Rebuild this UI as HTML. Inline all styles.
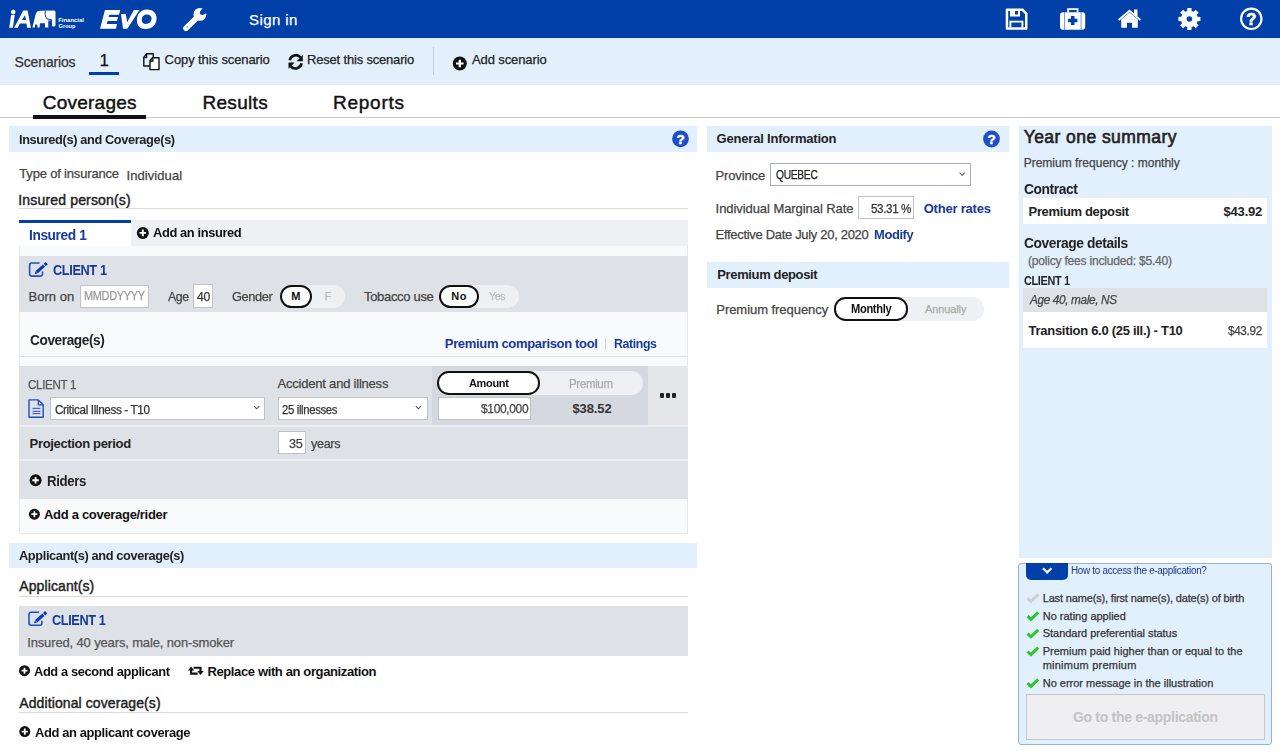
<!DOCTYPE html>
<html><head><meta charset="utf-8"><style>
html,body{margin:0;padding:0;}
body{width:1280px;height:754px;overflow:hidden;position:relative;background:#fff;font-family:"Liberation Sans",sans-serif;}
body>div,body>svg{position:absolute;}
.t{white-space:nowrap;}
.r{-webkit-text-stroke:0.25px currentColor;}
.sb{-webkit-text-stroke:0.6px currentColor;}
.md{-webkit-text-stroke:0.42px currentColor;}
</style></head><body>
<div style="left:0px;top:0px;width:1280px;height:38px;background:#0040a8;"></div>
<svg style="left:0px;top:0px;" width="90" height="38" viewBox="0 0 90 38"><circle cx="13.2" cy="12.1" r="2.3" fill="#fff"/><path d="M9.2 27.65 L12.9 27.65 L14.7 15 L11.1 15 Z" fill="#fff"/><path d="M14.1 27.65 L23.3 10.6 L27.6 10.6 L30.9 27.65 L27.2 27.65 L26.5 23.5 L19.9 23.5 L17.7 27.65 Z M21.8 20 L25.9 20 L25.1 15.2 Z" fill="#fff" fill-rule="evenodd"/><path d="M32.4 27.6 L35.8 13.8 Q36.8 10.8 40.2 10.8 L54 10.4 Q55.5 10.4 55.5 12.2 L55.5 25 Q55.5 26.6 54 26.6 L53.2 26.6 Q51.8 26.6 51.8 25.2 L51.8 20.5 L48.3 20.5 L48.3 27.6 L45 27.6 L45 23.3 L39.9 23.3 L39.6 27.6 L37.5 27.6 L37.2 24.5 L35.2 24.5 L34.8 27.6 Z" fill="#fff"/><path d="M45.2 10.8 Q44.6 19.4 49 19.4 L51.3 19.4 L51.3 26" fill="none" stroke="#0040a8" stroke-width="1"/><text x="58.2" y="21.6" font-family="Liberation Sans" font-weight="700" font-size="5.6" fill="#fff" textLength="25.8" lengthAdjust="spacingAndGlyphs">Financial</text><text x="58.6" y="27.6" font-family="Liberation Sans" font-weight="700" font-size="5.6" fill="#fff" textLength="16.8" lengthAdjust="spacingAndGlyphs">Group</text></svg>
<svg style="left:0px;top:0px;" width="170" height="38" viewBox="0 0 170 38"><path d="M105 10 L120.25 10 L119 14.75 L109.25 14.75 L108.6 16.9 L118 16.9 L117 21 L107.6 21 L106.8 24 L117 24 L116 28.75 L100 28.75 Z" fill="#fff"/><path d="M121 14 L125.8 14 L127.2 22.3 L133.8 10 L139.5 10 L127.3 28.75 L123 28.75 Z" fill="#fff"/><path d="M146.8 9.6 C152.5 9.6 156.6 13 156.6 18.2 C156.6 24.6 152 28.9 145.8 28.9 C140.2 28.9 136.9 25.4 136.9 20.4 C136.9 14 141.2 9.6 146.8 9.6 Z M146.5 14.5 C143.8 14.5 141.8 16.8 141.8 19.9 C141.8 22.4 143.4 24 145.8 24 C148.8 24 151.6 21.8 151.6 18.3 C151.6 15.9 149.6 14.5 146.5 14.5 Z" fill="#fff" fill-rule="evenodd"/></svg>
<svg style="left:0px;top:0px;" width="215" height="38" viewBox="0 0 215 38"><defs><mask id="wm" maskUnits="userSpaceOnUse" x="0" y="0" width="215" height="38"><rect width="215" height="38" fill="#fff"/><circle cx="202.4" cy="12.4" r="2.5" fill="#000"/><path d="M200.6 10.6 L205 6.2 L210 11.2 L204.2 14.2 Z" fill="#000"/></mask></defs><g mask="url(#wm)"><circle cx="199.9" cy="14.4" r="6.4" fill="#fff"/><path d="M197 17.4 L186 28.2" stroke="#fff" stroke-width="5.6" stroke-linecap="round"/></g><circle cx="187.3" cy="26.9" r="0.6" fill="#0040a8"/></svg>
<div class="t r" style="left:249.00px;top:12.30px;font-size:15px;line-height:15px;letter-spacing:0.413px;color:#fff;">Sign in</div>
<svg style="left:0px;top:0px;" width="1030" height="38" viewBox="0 0 1030 38"><path d="M1006.5 8.5 H1023 L1027.5 13 V28.5 Q1027.5 29.8 1026.2 29.8 H1007 Q1005.7 29.8 1005.7 28.5 V9.5 Q1005.7 8.5 1006.5 8.5 Z M1008.2 11 V27.3 H1025 V14 L1022 11 Z" fill="#fff" fill-rule="evenodd"/><path d="M1010 9.8 H1020 V16.5 H1010 Z M1015 10.5 V14.5 H1018 V10.5 Z" fill="#fff" fill-rule="evenodd"/><path d="M1009.4 20.8 H1023.4 V27.4 H1009.4 Z M1011.4 22.6 V27.4 H1021.4 V22.6 Z" fill="#fff" fill-rule="evenodd"/></svg>
<svg style="left:0px;top:0px;" width="1090" height="38" viewBox="0 0 1090 38"><path d="M1067.2 8.3 H1078.5 V12.2 H1076.6 V10 H1069.1 V12.2 H1067.2 Z" fill="#fff"/><rect x="1060" y="12.2" width="25.2" height="17.6" rx="3" fill="#fff"/><path d="M1064.6 12.2 V29.8 M1081.1 12.2 V29.8" stroke="#0040a8" stroke-width="0.8" opacity="0.7"/><path d="M1071 16 H1074.5 V18.8 H1077.4 V22.2 H1074.5 V25 H1071 V22.2 H1068.1 V18.8 H1071 Z" fill="#0040a8"/></svg>
<svg style="left:0px;top:0px;" width="1145" height="38" viewBox="0 0 1145 38"><path d="M1118 19.3 L1129.5 9.6 L1134 13.4 V9.6 H1137.5 V16.4 L1141 19.3 L1139.8 20.7 L1129.5 12.1 L1119.2 20.7 Z" fill="#fff"/><path d="M1121.2 19.4 L1129.5 12.6 L1137.8 19.4 V27.8 H1132 V22.8 H1127 V27.8 H1121.2 Z" fill="#fff"/></svg>
<svg style="left:0px;top:0px;" width="1210" height="38" viewBox="0 0 1210 38"><path d="M1197.52 16.84 L1200.40 16.88 L1200.40 21.12 L1197.52 21.16 L1196.67 23.21 L1198.67 25.28 L1195.68 28.27 L1193.61 26.27 L1191.56 27.12 L1191.52 30.00 L1187.28 30.00 L1187.24 27.12 L1185.19 26.27 L1183.12 28.27 L1180.13 25.28 L1182.13 23.21 L1181.28 21.16 L1178.40 21.12 L1178.40 16.88 L1181.28 16.84 L1182.13 14.79 L1180.13 12.72 L1183.12 9.73 L1185.19 11.73 L1187.24 10.88 L1187.28 8.00 L1191.52 8.00 L1191.56 10.88 L1193.61 11.73 L1195.68 9.73 L1198.67 12.72 L1196.67 14.79 Z M1192.20 19.00 A2.8 2.8 0 1 0 1186.60 19.00 A2.8 2.8 0 1 0 1192.20 19.00 Z" fill="#fff" fill-rule="evenodd"/></svg>
<svg style="left:0px;top:0px;" width="1280" height="38" viewBox="0 0 1280 38"><circle cx="1251.3" cy="18.8" r="10.2" fill="none" stroke="#fff" stroke-width="2.2"/><text x="1251.3" y="24.9" text-anchor="middle" font-family="Liberation Sans" font-weight="700" font-size="16.5" fill="#fff" stroke="#fff" stroke-width="0.7">?</text></svg>
<div style="left:0px;top:38px;width:1280px;height:47px;background:#e3f0fc;"></div>
<div class="t r" style="left:14.60px;top:54.65px;font-size:14px;line-height:14px;letter-spacing:-0.157px;color:#333;">Scenarios</div>
<div class="t r" style="left:99.40px;top:52.11px;font-size:17px;line-height:17px;color:#111;">1</div>
<div style="left:89px;top:72px;width:30px;height:3px;background:#0040a8;"></div>
<svg style="left:0px;top:0px;" width="165" height="85" viewBox="0 0 165 85"><path d="M146 53.8 H153.3 V57.6 M149.6 66 H143.8 V57.2 L146.8 53.8" fill="none" stroke="#111" stroke-width="1.4" stroke-linejoin="round"/><path d="M143.8 57.5 H146.6 V54" fill="none" stroke="#111" stroke-width="1.3"/><path d="M152.6 57.8 H159 V69.6 H150 V60.6 Z" fill="#fff" stroke="#111" stroke-width="1.4" stroke-linejoin="round"/><path d="M150 61 H152.8 V58" fill="none" stroke="#111" stroke-width="1.3"/></svg>
<div class="t r" style="left:164.60px;top:52.90px;font-size:13px;line-height:13px;letter-spacing:-0.101px;color:#222;">Copy this scenario</div>
<svg style="left:0px;top:0px;" width="310" height="85" viewBox="0 0 310 85"><path d="M289.7 60.3 A6.3 6.3 0 0 1 300.6 57.3" fill="none" stroke="#111" stroke-width="2.6"/><path d="M302.8 55 V61.2 H296.6 Z" fill="#111"/><path d="M301.6 63.3 A6.3 6.3 0 0 1 290.7 66.3" fill="none" stroke="#111" stroke-width="2.6"/><path d="M288.5 68.8 V62.5 H294.7 Z" fill="#111"/></svg>
<div class="t r" style="left:307.00px;top:52.90px;font-size:13px;line-height:13px;letter-spacing:-0.184px;color:#222;">Reset this scenario</div>
<div style="left:433px;top:47px;width:1px;height:28px;background:#c9ced6;"></div>
<svg style="left:0px;top:0px;" width="470" height="85" viewBox="0 0 470 85"><circle cx="459.8" cy="63.5" r="7" fill="#111"/><path d="M456 63.5 H463.6 M459.8 59.7 V67.3" stroke="#fff" stroke-width="2.2"/></svg>
<div class="t r" style="left:472.00px;top:52.90px;font-size:13px;line-height:13px;letter-spacing:-0.105px;color:#222;">Add scenario</div>
<div class="t md" style="left:42.70px;top:92.92px;font-size:19px;line-height:19px;letter-spacing:0.240px;color:#111;">Coverages</div>
<div class="t md" style="left:202.40px;top:92.92px;font-size:19px;line-height:19px;letter-spacing:0.324px;color:#111;">Results</div>
<div class="t md" style="left:333.00px;top:92.92px;font-size:19px;line-height:19px;letter-spacing:0.745px;color:#111;">Reports</div>
<div style="left:0px;top:117px;width:1280px;height:1px;background:#cbcbcb;"></div>
<div style="left:33px;top:115px;width:113px;height:4px;background:#111;"></div>
<div style="left:9px;top:126px;width:688px;height:26px;background:#e2effc;"></div>
<div class="t" style="left:19.20px;top:132.50px;font-size:13px;line-height:13px;font-weight:700;letter-spacing:-0.390px;transform:scaleX(0.9846);transform-origin:0 0;color:#222;">Insured(s) and Coverage(s)</div>
<svg style="left:0px;top:0px;" width="1280" height="754" viewBox="0 0 1280 754"><circle cx="680.5" cy="138.8" r="8.4" fill="#1f4fc8"/><text x="680.5" y="143.8" text-anchor="middle" font-family="Liberation Sans" font-weight="700" font-size="13.5" fill="#fff" stroke="#fff" stroke-width="0.5">?</text></svg>
<div class="t r" style="left:19.30px;top:167.30px;font-size:13px;line-height:13px;letter-spacing:-0.180px;color:#444;">Type of insurance</div>
<div class="t r" style="left:126.60px;top:168.90px;font-size:13px;line-height:13px;letter-spacing:0.062px;color:#444;">Individual</div>
<div class="t md" style="left:18.30px;top:192.85px;font-size:14px;line-height:14px;letter-spacing:0.165px;color:#222;">Insured person(s)</div>
<div style="left:19px;top:208px;width:669px;height:1px;background:#d9d9d9;"></div>
<div style="left:19px;top:220px;width:669px;height:26px;background:#eef0f3;"></div>
<div style="left:19px;top:220px;width:112px;height:26px;background:#fff;"></div>
<div style="left:19px;top:220px;width:112px;height:3px;background:#0040a8;"></div>
<div class="t" style="left:29.00px;top:227.95px;font-size:14px;line-height:14px;font-weight:700;letter-spacing:-0.420px;transform:scaleX(0.9815);transform-origin:0 0;color:#16399b;">Insured 1</div>
<svg style="left:0px;top:0px;" width="1280" height="754" viewBox="0 0 1280 754"><circle cx="142.8" cy="232.9" r="6" fill="#111"/><path d="M139.5 232.9 H146.10000000000002 M142.8 229.6 V236.20000000000002" stroke="#fff" stroke-width="1.92"/></svg>
<div class="t" style="left:153.40px;top:226.20px;font-size:13px;line-height:13px;font-weight:700;letter-spacing:-0.390px;transform:scaleX(0.9910);transform-origin:0 0;color:#111;">Add an insured</div>
<div style="left:19px;top:246px;width:669px;height:288px;background:#f8fafc;border:1px solid #e6e8eb;box-sizing:border-box;border-top:none;"></div>
<div style="left:19px;top:256px;width:669px;height:56px;background:#dee2e7;"></div>
<svg style="left:0px;top:0px;" width="1280" height="754" viewBox="0 0 1280 754"><path d="M39.6 263.0 H31.8 A2.2 2.2 0 0 0 29.6 265.2 V273.9 A2.2 2.2 0 0 0 31.8 276.09999999999997 H40.3 A2.2 2.2 0 0 0 42.5 273.9 V271.5" fill="none" stroke="#1f4fc8" stroke-width="1.6"/><path d="M36.7 272.09999999999997 L44.0 265.59999999999997" stroke="#0a3ab8" stroke-width="3.2" stroke-linecap="butt"/><path d="M44.7 265.0 L46.8 263.09999999999997" stroke="#0a3ab8" stroke-width="3.2" stroke-linecap="butt"/><path d="M35.4 271.2 L37.7 273.5 L34.8 274.09999999999997 Z" fill="#0a3ab8"/></svg>
<div class="t" style="left:53.20px;top:262.95px;font-size:14px;line-height:14px;font-weight:700;letter-spacing:-0.420px;transform:scaleX(0.9109);transform-origin:0 0;color:#16399b;">CLIENT 1</div>
<div class="t r" style="left:28.60px;top:289.80px;font-size:13px;line-height:13px;color:#444;">Born on</div>
<div style="left:80px;top:284.5px;width:69px;height:23px;background:#fff;border:1px solid #bfc3c8;box-sizing:border-box;"></div>
<div class="t r" style="left:83.70px;top:290.34px;font-size:12px;line-height:12px;letter-spacing:-0.360px;transform:scaleX(0.9130);transform-origin:0 0;color:#999;">MMDDYYYY</div>
<div class="t r" style="left:167.80px;top:289.80px;font-size:13px;line-height:13px;letter-spacing:-0.390px;transform:scaleX(0.9493);transform-origin:0 0;color:#444;">Age</div>
<div style="left:193px;top:284px;width:20px;height:24px;background:#fff;border:1px solid #bfc3c8;box-sizing:border-box;"></div>
<div class="t r" style="left:197.40px;top:289.50px;font-size:13px;line-height:13px;letter-spacing:-0.390px;transform:scaleX(0.9393);transform-origin:0 0;color:#333;">40</div>
<div class="t r" style="left:232.30px;top:289.80px;font-size:13px;line-height:13px;letter-spacing:-0.390px;transform:scaleX(0.9862);transform-origin:0 0;color:#444;">Gender</div>
<div style="left:279.6px;top:284.5px;width:65px;height:23.5px;background:#eef0f3;border-radius:11.75px;"></div>
<div style="left:279.6px;top:284.5px;width:32.5px;height:23.5px;background:#fff;border:2px solid #111;box-sizing:border-box;border-radius:11.75px;"></div>
<div class="t" style="left:291.20px;top:291.19px;font-size:11px;line-height:11px;font-weight:700;color:#111;">M</div>
<div class="t r" style="left:324.50px;top:290.89px;font-size:11px;line-height:11px;color:#bbb;">F</div>
<div class="t r" style="left:364.00px;top:289.80px;font-size:13px;line-height:13px;letter-spacing:-0.316px;color:#444;">Tobacco use</div>
<div style="left:439px;top:284.5px;width:80px;height:23.5px;background:#eef0f3;border-radius:11.75px;"></div>
<div style="left:439px;top:284.5px;width:40px;height:23.5px;background:#fff;border:2px solid #111;box-sizing:border-box;border-radius:11.75px;"></div>
<div class="t" style="left:451.15px;top:291.19px;font-size:11px;line-height:11px;font-weight:700;letter-spacing:0.556px;color:#111;">No</div>
<div class="t r" style="left:489.40px;top:290.89px;font-size:11px;line-height:11px;letter-spacing:-0.330px;transform:scaleX(0.9559);transform-origin:0 0;color:#bbb;">Yes</div>
<div class="t" style="left:29.60px;top:332.55px;font-size:14px;line-height:14px;font-weight:700;letter-spacing:-0.420px;transform:scaleX(0.9756);transform-origin:0 0;color:#222;">Coverage(s)</div>
<div class="t" style="left:444.80px;top:336.80px;font-size:13px;line-height:13px;font-weight:700;letter-spacing:-0.330px;color:#16399b;">Premium comparison tool</div>
<div style="left:605px;top:338px;width:1px;height:12px;background:#cfd3d8;"></div>
<div class="t" style="left:614.00px;top:336.80px;font-size:13px;line-height:13px;font-weight:700;letter-spacing:-0.390px;transform:scaleX(0.9468);transform-origin:0 0;color:#16399b;">Ratings</div>
<div style="left:19px;top:356px;width:669px;height:1px;background:#dde0e4;"></div>
<div style="left:19px;top:366px;width:669px;height:59px;background:#dee2e7;"></div>
<div style="left:432px;top:366px;width:216px;height:59px;background:#d5d8de;"></div>
<div style="left:648px;top:366px;width:40px;height:59px;background:#e4e6ea;"></div>
<div class="t r" style="left:27.60px;top:377.50px;font-size:13px;line-height:13px;letter-spacing:-0.390px;transform:scaleX(0.8944);transform-origin:0 0;color:#555;">CLIENT 1</div>
<div class="t r" style="left:277.60px;top:377.00px;font-size:13px;line-height:13px;letter-spacing:-0.216px;color:#444;">Accident and illness</div>
<div style="left:437px;top:371.4px;width:206px;height:23.6px;background:#eef0f3;border-radius:11.8px;"></div>
<div style="left:437px;top:371.4px;width:103px;height:23.6px;background:#fff;border:2px solid #111;box-sizing:border-box;border-radius:11.8px;"></div>
<div class="t" style="left:469.00px;top:377.87px;font-size:11.5px;line-height:11.5px;font-weight:700;letter-spacing:-0.345px;transform:scaleX(0.9551);transform-origin:0 0;color:#111;">Amount</div>
<div class="t r" style="left:569.20px;top:378.34px;font-size:12px;line-height:12px;letter-spacing:-0.360px;transform:scaleX(0.9597);transform-origin:0 0;color:#aaa;">Premium</div>
<svg style="left:0px;top:0px;" width="1280" height="754" viewBox="0 0 1280 754"><path d="M29 399.9 H38.3 L43.2 404.8 V417.2 H29 Z" fill="none" stroke="#1f4fc8" stroke-width="1.4" stroke-linejoin="round"/><path d="M38.3 400 V404.8 H43.2" fill="none" stroke="#1f4fc8" stroke-width="1.3"/><path d="M32.5 408.3 H40.3 M32.5 411.3 H40.3 M32.5 413.6 H40.3" stroke="#1f4fc8" stroke-width="1"/></svg>
<div style="left:50px;top:397px;width:215px;height:23px;background:#fff;border:1px solid #bfc3c8;box-sizing:border-box;"></div>
<div class="t r" style="left:54.60px;top:403.64px;font-size:12px;line-height:12px;letter-spacing:-0.360px;transform:scaleX(0.9733);transform-origin:0 0;color:#333;">Critical Illness - T10</div>
<svg style="left:0px;top:0px;" width="1280" height="754" viewBox="0 0 1280 754"><path d="M254.1 406.2 L256.7 408.8 L259.3 406.2" fill="none" stroke="#555" stroke-width="1.1"/></svg>
<div style="left:277.6px;top:397px;width:150px;height:23px;background:#fff;border:1px solid #bfc3c8;box-sizing:border-box;"></div>
<div class="t r" style="left:282.30px;top:403.64px;font-size:12px;line-height:12px;letter-spacing:-0.360px;transform:scaleX(0.9431);transform-origin:0 0;color:#333;">25 illnesses</div>
<svg style="left:0px;top:0px;" width="1280" height="754" viewBox="0 0 1280 754"><path d="M415.79999999999995 406.2 L418.4 408.8 L421.0 406.2" fill="none" stroke="#555" stroke-width="1.1"/></svg>
<div style="left:437.5px;top:397px;width:93px;height:23px;background:#fff;border:1px solid #bfc3c8;box-sizing:border-box;"></div>
<div class="t r" style="left:480.60px;top:401.80px;font-size:13px;line-height:13px;letter-spacing:-0.390px;transform:scaleX(0.9247);transform-origin:0 0;color:#444;">$100,000</div>
<div class="t" style="left:572.40px;top:401.80px;font-size:13px;line-height:13px;font-weight:700;letter-spacing:-0.106px;color:#333;">$38.52</div>
<div style="left:660.0px;top:392.8px;width:4.4px;height:4.8px;background:#222;border-radius:1px;"></div>
<div style="left:666.0px;top:392.8px;width:4.4px;height:4.8px;background:#222;border-radius:1px;"></div>
<div style="left:671.9px;top:392.8px;width:4.4px;height:4.8px;background:#222;border-radius:1px;"></div>
<div style="left:19px;top:425px;width:669px;height:2px;background:#eceef1;"></div>
<div style="left:19px;top:427px;width:669px;height:32px;background:#dee2e7;"></div>
<div class="t" style="left:29.60px;top:437.00px;font-size:13px;line-height:13px;font-weight:700;letter-spacing:-0.335px;color:#222;">Projection period</div>
<div style="left:277.6px;top:431.3px;width:28px;height:23.2px;background:#fff;border:1px solid #bfc3c8;box-sizing:border-box;"></div>
<div class="t r" style="left:289.00px;top:437.00px;font-size:13px;line-height:13px;letter-spacing:-0.390px;transform:scaleX(0.9754);transform-origin:0 0;color:#444;">35</div>
<div class="t r" style="left:310.70px;top:437.00px;font-size:13px;line-height:13px;letter-spacing:-0.390px;transform:scaleX(0.9763);transform-origin:0 0;color:#444;">years</div>
<div style="left:19px;top:459px;width:669px;height:2px;background:#eceef1;"></div>
<div style="left:19px;top:461px;width:669px;height:37.5px;background:#dee2e7;"></div>
<svg style="left:0px;top:0px;" width="1280" height="754" viewBox="0 0 1280 754"><circle cx="35.6" cy="480.3" r="6" fill="#111"/><path d="M32.300000000000004 480.3 H38.9 M35.6 477.0 V483.6" stroke="#fff" stroke-width="1.92"/></svg>
<div class="t" style="left:46.60px;top:473.75px;font-size:14px;line-height:14px;font-weight:700;letter-spacing:-0.420px;transform:scaleX(0.9476);transform-origin:0 0;color:#222;">Riders</div>
<svg style="left:0px;top:0px;" width="1280" height="754" viewBox="0 0 1280 754"><circle cx="34.4" cy="514.2" r="5.5" fill="#111"/><path d="M31.375 514.2 H37.425 M34.4 511.17500000000007 V517.225" stroke="#fff" stroke-width="1.76"/></svg>
<div class="t" style="left:44.00px;top:508.00px;font-size:13px;line-height:13px;font-weight:700;letter-spacing:-0.304px;color:#111;">Add a coverage/rider</div>
<div style="left:9px;top:542.5px;width:688px;height:25.5px;background:#e2effc;"></div>
<div class="t" style="left:19.30px;top:548.70px;font-size:13px;line-height:13px;font-weight:700;letter-spacing:-0.390px;transform:scaleX(0.9847);transform-origin:0 0;color:#222;">Applicant(s) and coverage(s)</div>
<div class="t md" style="left:19.30px;top:579.35px;font-size:14px;line-height:14px;letter-spacing:0.095px;color:#222;">Applicant(s)</div>
<div style="left:19px;top:596px;width:669px;height:1px;background:#d9d9d9;"></div>
<div style="left:19px;top:606px;width:669px;height:49.5px;background:#dee2e7;"></div>
<svg style="left:0px;top:0px;" width="1280" height="754" viewBox="0 0 1280 754"><path d="M39.0 612.1999999999999 H31.2 A2.2 2.2 0 0 0 29.0 614.4 V623.1 A2.2 2.2 0 0 0 31.2 625.3 H39.7 A2.2 2.2 0 0 0 41.9 623.1 V620.6999999999999" fill="none" stroke="#1f4fc8" stroke-width="1.6"/><path d="M36.1 621.3 L43.4 614.8" stroke="#0a3ab8" stroke-width="3.2" stroke-linecap="butt"/><path d="M44.1 614.1999999999999 L46.2 612.3" stroke="#0a3ab8" stroke-width="3.2" stroke-linecap="butt"/><path d="M34.8 620.4 L37.1 622.6999999999999 L34.2 623.3 Z" fill="#0a3ab8"/></svg>
<div class="t" style="left:52.00px;top:612.65px;font-size:14px;line-height:14px;font-weight:700;letter-spacing:-0.420px;transform:scaleX(0.9075);transform-origin:0 0;color:#16399b;">CLIENT 1</div>
<div class="t r" style="left:27.20px;top:635.70px;font-size:13px;line-height:13px;letter-spacing:-0.141px;color:#555;">Insured, 40 years, male, non-smoker</div>
<svg style="left:0px;top:0px;" width="1280" height="754" viewBox="0 0 1280 754"><circle cx="24.5" cy="670.7" r="5.5" fill="#111"/><path d="M21.475 670.7 H27.525 M24.5 667.6750000000001 V673.725" stroke="#fff" stroke-width="1.76"/></svg>
<div class="t" style="left:34.20px;top:664.60px;font-size:13px;line-height:13px;font-weight:700;letter-spacing:-0.390px;transform:scaleX(0.9878);transform-origin:0 0;color:#111;">Add a second applicant</div>
<svg style="left:0px;top:0px;" width="1280" height="754" viewBox="0 0 1280 754"><path d="M191.1 669.5 V673.6 H197.6 M193.6 667.8 H200.5 V671.8" fill="none" stroke="#111" stroke-width="2.1"/><path d="M187.9 670.6 L191.1 666.6 L194.3 670.6 Z M197.3 671.1 L200.5 675.1 L203.7 671.1 Z" fill="#111"/></svg>
<div class="t" style="left:207.40px;top:664.60px;font-size:13px;line-height:13px;font-weight:700;letter-spacing:-0.370px;color:#111;">Replace with an organization</div>
<div class="t md" style="left:19.30px;top:696.05px;font-size:14px;line-height:14px;letter-spacing:0.094px;color:#222;">Additional coverage(s)</div>
<div style="left:19px;top:712px;width:669px;height:1px;background:#d9d9d9;"></div>
<svg style="left:0px;top:0px;" width="1280" height="754" viewBox="0 0 1280 754"><circle cx="24.8" cy="731.6" r="5.5" fill="#111"/><path d="M21.775 731.6 H27.825000000000003 M24.8 728.575 V734.625" stroke="#fff" stroke-width="1.76"/></svg>
<div class="t" style="left:35.00px;top:725.50px;font-size:13px;line-height:13px;font-weight:700;letter-spacing:-0.390px;transform:scaleX(0.9959);transform-origin:0 0;color:#111;">Add an applicant coverage</div>
<div style="left:707px;top:126px;width:302px;height:26px;background:#e2effc;"></div>
<div class="t" style="left:716.60px;top:132.40px;font-size:13px;line-height:13px;font-weight:700;letter-spacing:-0.199px;color:#222;">General Information</div>
<svg style="left:0px;top:0px;" width="1280" height="754" viewBox="0 0 1280 754"><circle cx="991.5" cy="139" r="8.4" fill="#1f4fc8"/><text x="991.5" y="144" text-anchor="middle" font-family="Liberation Sans" font-weight="700" font-size="13.5" fill="#fff" stroke="#fff" stroke-width="0.5">?</text></svg>
<div class="t r" style="left:715.60px;top:168.60px;font-size:13px;line-height:13px;letter-spacing:-0.150px;color:#444;">Province</div>
<div style="left:770px;top:163px;width:201px;height:23.4px;background:#fff;border:1px solid #aab0b8;box-sizing:border-box;"></div>
<div class="t r" style="left:775.50px;top:169.02px;font-size:12.5px;line-height:12.5px;letter-spacing:-0.375px;transform:scaleX(0.8214);transform-origin:0 0;color:#222;">QUEBEC</div>
<svg style="left:0px;top:0px;" width="1280" height="754" viewBox="0 0 1280 754"><path d="M959.6 172.7 L962.2 175.3 L964.8000000000001 172.7" fill="none" stroke="#555" stroke-width="1.1"/></svg>
<div class="t r" style="left:715.60px;top:202.10px;font-size:13px;line-height:13px;letter-spacing:-0.067px;color:#444;">Individual Marginal Rate</div>
<div style="left:858px;top:196.2px;width:56px;height:23px;background:#fff;border:1px solid #bfc3c8;box-sizing:border-box;"></div>
<div class="t r" style="left:871.10px;top:202.94px;font-size:12px;line-height:12px;letter-spacing:-0.360px;transform:scaleX(0.9644);transform-origin:0 0;color:#333;">53.31 %</div>
<div class="t" style="left:923.70px;top:202.10px;font-size:13px;line-height:13px;font-weight:700;letter-spacing:-0.213px;color:#16399b;">Other rates</div>
<div class="t r" style="left:715.60px;top:228.10px;font-size:13px;line-height:13px;letter-spacing:-0.315px;color:#444;">Effective Date July 20, 2020</div>
<div class="t" style="left:874.00px;top:228.10px;font-size:13px;line-height:13px;font-weight:700;letter-spacing:-0.390px;transform:scaleX(0.9950);transform-origin:0 0;color:#16399b;">Modify</div>
<div style="left:707px;top:262px;width:302px;height:25.7px;background:#e2effc;"></div>
<div class="t" style="left:717.30px;top:268.30px;font-size:13px;line-height:13px;font-weight:700;letter-spacing:-0.367px;color:#222;">Premium deposit</div>
<div class="t r" style="left:716.30px;top:302.60px;font-size:13px;line-height:13px;letter-spacing:-0.051px;color:#444;">Premium frequency</div>
<div style="left:834.3px;top:297.4px;width:149.3px;height:23.2px;background:#eef0f3;border-radius:11.6px;"></div>
<div style="left:834.3px;top:297.4px;width:74px;height:23.2px;background:#fff;border:2px solid #111;box-sizing:border-box;border-radius:11.6px;"></div>
<div class="t" style="left:851.30px;top:303.04px;font-size:12px;line-height:12px;font-weight:700;letter-spacing:-0.360px;transform:scaleX(0.9263);transform-origin:0 0;color:#111;">Monthly</div>
<div class="t r" style="left:925.00px;top:303.89px;font-size:11px;line-height:11px;letter-spacing:-0.114px;color:#aaa;">Annually</div>
<div style="left:1018.5px;top:126px;width:253px;height:432px;background:#e2effc;"></div>
<div class="t sb" style="left:1023.70px;top:128.69px;font-size:17.5px;line-height:17.5px;letter-spacing:0.435px;color:#222;">Year one summary</div>
<div class="t r" style="left:1023.70px;top:156.54px;font-size:12px;line-height:12px;color:#444;">Premium frequency : monthly</div>
<div class="t" style="left:1023.70px;top:182.15px;font-size:14px;line-height:14px;font-weight:700;letter-spacing:-0.420px;transform:scaleX(0.9862);transform-origin:0 0;color:#222;">Contract</div>
<div style="left:1023px;top:198px;width:244px;height:26px;background:#fff;"></div>
<div class="t" style="left:1028.60px;top:204.80px;font-size:13px;line-height:13px;font-weight:700;letter-spacing:-0.353px;color:#222;">Premium deposit</div>
<div class="t" style="left:1223.50px;top:204.80px;font-size:13px;line-height:13px;font-weight:700;letter-spacing:-0.186px;color:#222;">$43.92</div>
<div class="t" style="left:1023.70px;top:236.35px;font-size:14px;line-height:14px;font-weight:700;letter-spacing:-0.420px;transform:scaleX(0.9853);transform-origin:0 0;color:#222;">Coverage details</div>
<div class="t r" style="left:1028.00px;top:254.54px;font-size:12px;line-height:12px;letter-spacing:-0.194px;color:#666;">(policy fees included: $5.40)</div>
<div class="t" style="left:1023.70px;top:274.54px;font-size:12px;line-height:12px;font-weight:700;letter-spacing:-0.360px;transform:scaleX(0.9072);transform-origin:0 0;color:#222;">CLIENT 1</div>
<div style="left:1023px;top:288px;width:244px;height:24px;background:#dee2e7;"></div>
<div class="t r" style="left:1029.58px;top:293.84px;font-size:12px;line-height:12px;font-style:italic;letter-spacing:-0.360px;transform:scaleX(0.9817);transform-origin:0 0;color:#444;">Age 40, male, NS</div>
<div style="left:1023px;top:312px;width:244px;height:36px;background:#fff;"></div>
<div class="t" style="left:1028.60px;top:323.70px;font-size:13px;line-height:13px;font-weight:700;letter-spacing:-0.287px;color:#222;">Transition 6.0 (25 ill.) - T10</div>
<div class="t r" style="left:1227.70px;top:324.54px;font-size:12px;line-height:12px;letter-spacing:-0.360px;transform:scaleX(0.9793);transform-origin:0 0;color:#444;">$43.92</div>
<div style="left:1018px;top:563px;width:254px;height:182px;background:#e2effc;border:1px solid #93b2dc;box-sizing:border-box;border-radius:3px;"></div>
<div style="left:1026px;top:563px;width:42px;height:16.6px;background:#0040a8;border-radius:0 0 5px 5px;"></div>
<svg style="left:0px;top:0px;" width="1280" height="754" viewBox="0 0 1280 754"><path d="M1043.0 568.1999999999999 L1047.2 572.4 L1051.4 568.1999999999999" fill="none" stroke="#fff" stroke-width="2.2"/></svg>
<div class="t" style="left:1071.00px;top:565.83px;font-size:10px;line-height:10px;letter-spacing:-0.300px;transform:scaleX(0.9885);transform-origin:0 0;color:#16399b;">How to access the e-application?</div>
<svg style="left:0px;top:0px;" width="1280" height="754" viewBox="0 0 1280 754"><path d="M1027.5 598.2 L1030.8999999999999 601.4 L1038.1999999999998 594.4" fill="none" stroke="#cfcfcf" stroke-width="3"/></svg>
<div class="t r" style="left:1042.70px;top:592.69px;font-size:11px;line-height:11px;letter-spacing:-0.155px;color:#333;">Last name(s), first name(s), date(s) of birth</div>
<svg style="left:0px;top:0px;" width="1280" height="754" viewBox="0 0 1280 754"><path d="M1027.5 616.2 L1030.8999999999999 619.4 L1038.1999999999998 612.4" fill="none" stroke="#2ec52e" stroke-width="3"/></svg>
<div class="t r" style="left:1042.70px;top:610.69px;font-size:11px;line-height:11px;color:#333;">No rating applied</div>
<svg style="left:0px;top:0px;" width="1280" height="754" viewBox="0 0 1280 754"><path d="M1027.5 633.6 L1030.8999999999999 636.8 L1038.1999999999998 629.8" fill="none" stroke="#2ec52e" stroke-width="3"/></svg>
<div class="t r" style="left:1042.70px;top:628.09px;font-size:11px;line-height:11px;letter-spacing:-0.024px;color:#333;">Standard preferential status</div>
<svg style="left:0px;top:0px;" width="1280" height="754" viewBox="0 0 1280 754"><path d="M1027.5 651.5 L1030.8999999999999 654.6999999999999 L1038.1999999999998 647.6999999999999" fill="none" stroke="#2ec52e" stroke-width="3"/></svg>
<div class="t r" style="left:1042.70px;top:645.99px;font-size:11px;line-height:11px;letter-spacing:0.015px;color:#333;">Premium paid higher than or equal to the</div>
<div class="t r" style="left:1042.70px;top:659.69px;font-size:11px;line-height:11px;letter-spacing:0.229px;color:#333;">minimum premium</div>
<svg style="left:0px;top:0px;" width="1280" height="754" viewBox="0 0 1280 754"><path d="M1027.5 683.2 L1030.8999999999999 686.4 L1038.1999999999998 679.4" fill="none" stroke="#2ec52e" stroke-width="3"/></svg>
<div class="t r" style="left:1042.70px;top:677.69px;font-size:11px;line-height:11px;color:#333;">No error message in the illustration</div>
<div style="left:1026px;top:694px;width:239px;height:46.3px;background:#efeff1;border:1px solid #c6c6ca;box-sizing:border-box;"></div>
<div class="t" style="left:1072.90px;top:709.95px;font-size:14px;line-height:14px;font-weight:700;letter-spacing:-0.301px;color:#c3c3c3;">Go to the e-application</div>
</body></html>
